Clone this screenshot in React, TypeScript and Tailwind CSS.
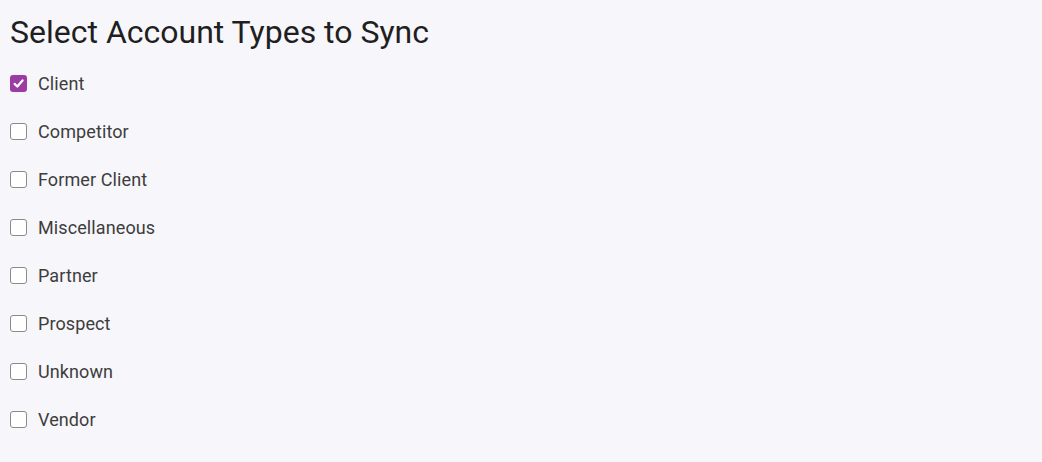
import { useState } from "react";

const accountTypes = [
	"Client",
	"Competitor",
	"Former Client",
	"Miscellaneous",
	"Partner",
	"Prospect",
	"Unknown",
	"Vendor",
];

export default function App() {
	const [selected, setSelected] = useState<string[]>(["Client"]);

	const toggle = (name: string) =>
		setSelected((prev) =>
			prev.includes(name) ? prev.filter((n) => n !== name) : [...prev, name]
		);

	return (
		<div className="min-h-[462px] w-full bg-[#f7f6fb] px-[10px] pt-[12px] font-['Roboto',sans-serif]">
			<h1 className="text-[32px] leading-[40px] text-[#1f1f1f]">Select Account Types to Sync</h1>
			<div className="mt-[7px] flex flex-col">
				{accountTypes.map((name) => {
					const checked = selected.includes(name);
					return (
						<label key={name} className="flex h-[48px] cursor-pointer items-center gap-[11px]">
							<span
								onClick={() => toggle(name)}
								className={
									checked
										? "flex h-[17px] w-[17px] items-center justify-center rounded-[3px] bg-[#9b3ca5]"
										: "h-[17px] w-[17px] rounded-[3px] border border-[#8a8a8a] bg-white"
								}>
								{checked && (
									<svg width="13" height="13" viewBox="0 0 12 12" fill="none">
										<path d="M2.4 6.4 L4.9 8.8 L9.7 3.2" stroke="white" strokeWidth="2.1" strokeLinecap="round" strokeLinejoin="round" />
									</svg>
								)}
							</span>
							<span className="text-[18px] tracking-[0.1px] text-[#3d3d3d]">{name}</span>
						</label>
					);
				})}
			</div>
		</div>
	);
}
